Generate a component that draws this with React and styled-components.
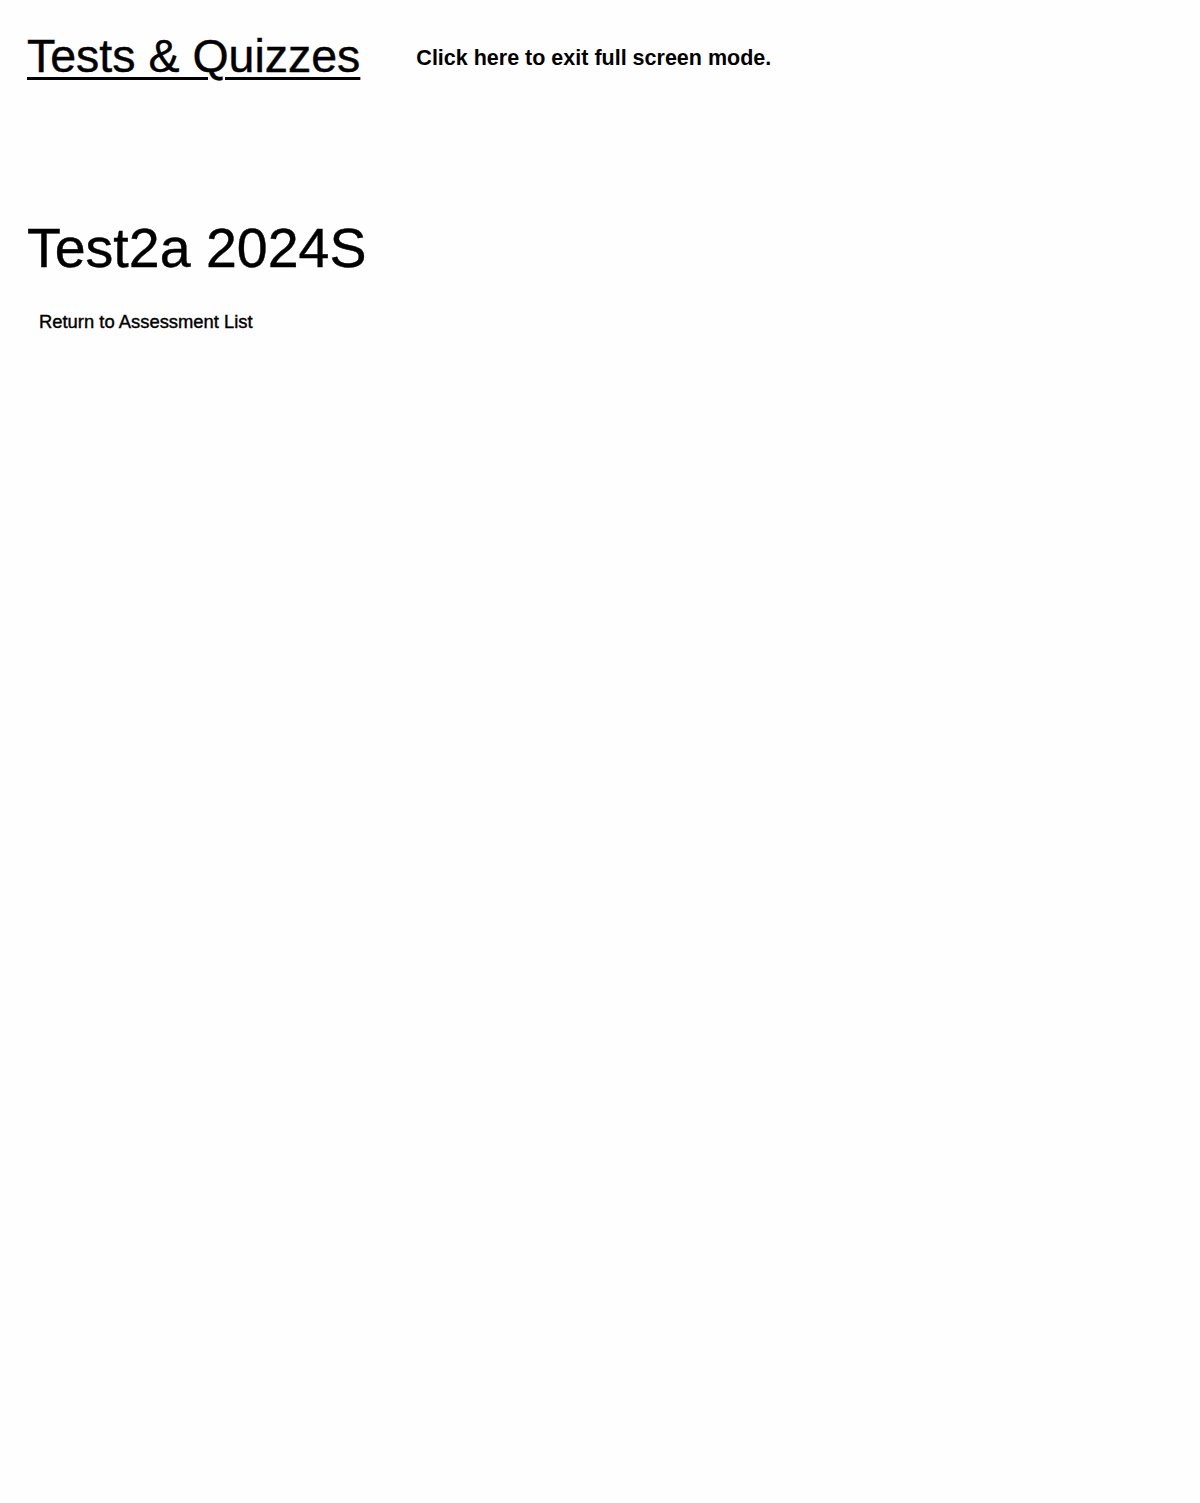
import styled, { createGlobalStyle } from 'styled-components';

const GlobalStyle = createGlobalStyle`
  html, body {
    margin: 0;
    padding: 0;
    background: #fefefe;
  }
  body {
    font-family: "Liberation Sans", Arial, sans-serif;
    color: #000;
  }
`;

const Page = styled.div`
  padding: 24px 0 0 27px;
  min-height: 1479px;
`;

const Header = styled.header`
  display: flex;
  align-items: center;
  gap: 56px;
`;

const ToolTitle = styled.a`
  font-size: 46.5px;
  line-height: 64px;
  color: #000;
  text-decoration: underline;
  text-decoration-thickness: 3px;
  text-underline-offset: 5px;
  -webkit-text-stroke: 0.4px #000;
  cursor: pointer;
`;

const ExitLink = styled.a`
  font-size: 21.5px;
  font-weight: bold;
  color: #000;
  text-decoration: none;
  cursor: pointer;
  margin-top: 4px;
`;

const AssessmentTitle = styled.h1`
  margin: 128px 0 0 0;
  font-size: 55.5px;
  font-weight: normal;
  line-height: 64px;
  -webkit-text-stroke: 0.4px #000;
`;

const BackLink = styled.a`
  display: inline-block;
  margin: 31px 0 0 12px;
  font-size: 18.4px;
  color: #000;
  text-decoration: none;
  -webkit-text-stroke: 0.4px #000;
  cursor: pointer;
`;

export default function App() {
  return (
    <>
      <GlobalStyle />
      <Page>
        <Header>
          <ToolTitle>Tests &amp; Quizzes</ToolTitle>
          <ExitLink>Click here to exit full screen mode.</ExitLink>
        </Header>
        <AssessmentTitle>Test2a 2024S</AssessmentTitle>
        <BackLink>Return to Assessment List</BackLink>
      </Page>
    </>
  );
}
